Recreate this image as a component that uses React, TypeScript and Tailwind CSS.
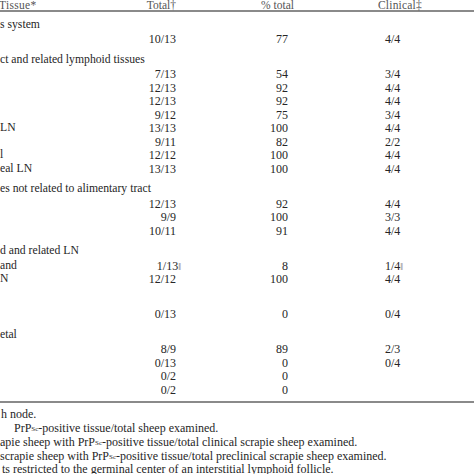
import React from 'react';

type Row =
  | { kind: 'head'; text: string; first?: boolean }
  | { kind: 'data'; label?: string; total: string; pct: string; clin?: string; mark?: boolean };

const rows: Row[] = [
  { kind: 'head', text: 's system', first: true },
  { kind: 'data', total: '10/13', pct: '77', clin: '4/4' },
  { kind: 'head', text: 'ct and related lymphoid tissues' },
  { kind: 'data', total: '7/13', pct: '54', clin: '3/4' },
  { kind: 'data', total: '12/13', pct: '92', clin: '4/4' },
  { kind: 'data', total: '12/13', pct: '92', clin: '4/4' },
  { kind: 'data', total: '9/12', pct: '75', clin: '3/4' },
  { kind: 'data', label: 'LN', total: '13/13', pct: '100', clin: '4/4' },
  { kind: 'data', total: '9/11', pct: '82', clin: '2/2' },
  { kind: 'data', label: 'l', total: '12/12', pct: '100', clin: '4/4' },
  { kind: 'data', label: 'eal LN', total: '13/13', pct: '100', clin: '4/4' },
  { kind: 'head', text: 'es not related to alimentary tract' },
  { kind: 'data', total: '12/13', pct: '92', clin: '4/4' },
  { kind: 'data', total: '9/9', pct: '100', clin: '3/3' },
  { kind: 'data', total: '10/11', pct: '91', clin: '4/4' },
  { kind: 'head', text: 'd and related LN' },
  { kind: 'data', label: 'and', total: '1/13', pct: '8', clin: '1/4', mark: true },
  { kind: 'data', label: 'N', total: '12/12', pct: '100', clin: '4/4' },
  { kind: 'head', text: '' },
  { kind: 'data', total: '0/13', pct: '0', clin: '0/4' },
  { kind: 'head', text: 'etal' },
  { kind: 'data', total: '8/9', pct: '89', clin: '2/3' },
  { kind: 'data', total: '0/13', pct: '0', clin: '0/4' },
  { kind: 'data', total: '0/2', pct: '0' },
  { kind: 'data', total: '0/2', pct: '0' },
];

const Sc = () => <sup className="text-[7px] relative -top-[1px]">Sc</sup>;

export default function App() {
  return (
    <div className="w-[474px] h-[474px] overflow-hidden bg-white text-[#262626] font-['Liberation_Serif','Times_New_Roman',serif]">
      {/* header */}
      <div className="grid grid-cols-[140px_36px_118px_1fr] h-[12px] items-center text-[11.5px] leading-none text-[#555] border-b-2 border-[#8a8a8a]">
        <span className="-ml-[1px] tracking-[0.3px]">Tissue*</span>
        <span className="text-right whitespace-nowrap">Total†</span>
        <span className="text-right whitespace-nowrap">% total</span>
        <span className="pl-[84px] whitespace-nowrap tracking-[0.2px]">Clinical‡</span>
      </div>

      <div className="text-[12px] leading-none">
        {rows.map((r, i) =>
          r.kind === 'head' ? (
            <div
              key={i}
              className={
                (r.first ? 'mt-[6px] ' : 'mt-[7px] ') +
                'mb-[1px] h-[13.5px] flex items-center whitespace-nowrap text-[11.7px]'
              }
            >
              {r.text}
            </div>
          ) : (
            <div key={i} className="grid grid-cols-[140px_36px_112px_1fr] h-[13.5px] items-center">
              <span className="whitespace-nowrap text-[11.7px]">{r.label}</span>
              <span className="text-right whitespace-nowrap">
                {r.total}
                {r.mark && <span className="text-[10px] text-[#777] -mr-[5px]">‖</span>}
              </span>
              <span className="text-right">{r.pct}</span>
              <span className="pl-[97px] whitespace-nowrap">
                {r.clin}
                {r.mark && <span className="text-[10px] text-[#777]">‖</span>}
              </span>
            </div>
          )
        )}
      </div>

      <div className="mt-[4px] border-t-2 border-[#8a8a8a]" />

      {/* footnotes */}
      <div className="pt-[4px] text-[12px] leading-none whitespace-nowrap">
        <div className="h-[14px] flex items-center pl-[1px]">h node.</div>
        <div className="h-[14px] flex items-center pl-[14px]">
          <span>
            PrP<Sc />-positive tissue/total sheep examined.
          </span>
        </div>
        <div className="h-[14px] flex items-center">
          <span>
            apie sheep with PrP<Sc />-positive tissue/total clinical scrapie sheep examined.
          </span>
        </div>
        <div className="h-[14px] flex items-center">
          <span>
            scrapie sheep with PrP<Sc />-positive tissue/total preclinical scrapie sheep examined.
          </span>
        </div>
        <div className="h-[12px] flex items-end pl-[2px] pt-[1px]">
          ts restricted to the germinal center of an interstitial lymphoid follicle.
        </div>
      </div>
    </div>
  );
}
